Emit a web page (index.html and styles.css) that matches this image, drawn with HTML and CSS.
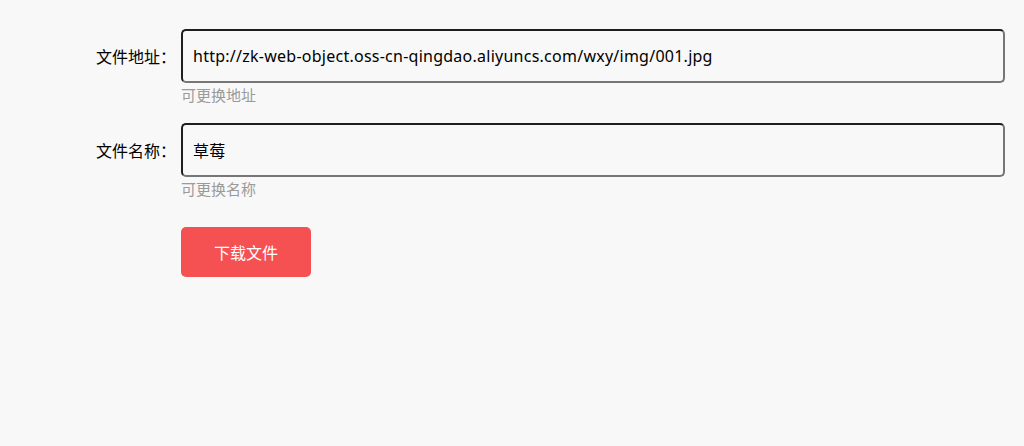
FILE: index.html
```
<!DOCTYPE html>
<html lang="zh">
<head>
<meta charset="utf-8">
<link rel="stylesheet" href="styles.css">
</head>
<body>
<form class="form">
  <div class="row">
    <label class="label">文件地址：</label>
    <div class="field">
      <input class="input" type="text" value="http://zk-web-object.oss-cn-qingdao.aliyuncs.com/wxy/img/001.jpg">
      <div class="hint">可更换地址</div>
    </div>
  </div>
  <div class="row">
    <label class="label">文件名称：</label>
    <div class="field">
      <input class="input" type="text" value="草莓">
      <div class="hint">可更换名称</div>
    </div>
  </div>
  <div class="row actions">
    <div class="label"></div>
    <div class="field">
      <button class="btn" type="button">下载文件</button>
    </div>
  </div>
</form>
</body>
</html>
```
FILE: styles.css
```
html, body {
  margin: 0;
  padding: 0;
  background: #f8f8f8;
  font-family: "Noto Sans", "Noto Sans CJK SC", sans-serif;
}
.form {
  padding: 29px 19px 0 0;
  display: flex;
  flex-direction: column;
  gap: 18px;
}
.row {
  display: flex;
  align-items: flex-start;
}
.label {
  width: 181px;
  flex: none;
  box-sizing: border-box;
  padding-right: 5px;
  text-align: right;
  font-size: 16px;
  line-height: 54px;
  color: #000;
  font-family: "Noto Sans CJK SC", sans-serif;
}
.field {
  flex: 1;
  display: flex;
  flex-direction: column;
}
.input {
  box-sizing: border-box;
  width: 100%;
  height: 54px;
  margin: 0;
  padding: 0 10px;
  border: 2px solid;
  border-color: #1e1e1e #767676 #767676 #1e1e1e;
  border-radius: 5px;
  background: #f8f8f8;
  font-size: 16px;
  letter-spacing: 0.25px;
  color: #000;
  font-family: "Noto Sans", "Noto Sans CJK SC", sans-serif;
  outline: none;
}
.hint {
  margin-top: 2px;
  font-size: 15px;
  line-height: 20px;
  color: #9a9a9a;
  font-family: "Noto Sans CJK SC", sans-serif;
}
.actions {
  margin-top: 10px;
}
.btn {
  width: 130px;
  height: 50px;
  border: none;
  border-radius: 5px;
  background: #f55052;
  color: #fff;
  font-size: 16px;
  font-family: "Noto Sans CJK SC", sans-serif;
  padding: 0;
  cursor: pointer;
}
```
